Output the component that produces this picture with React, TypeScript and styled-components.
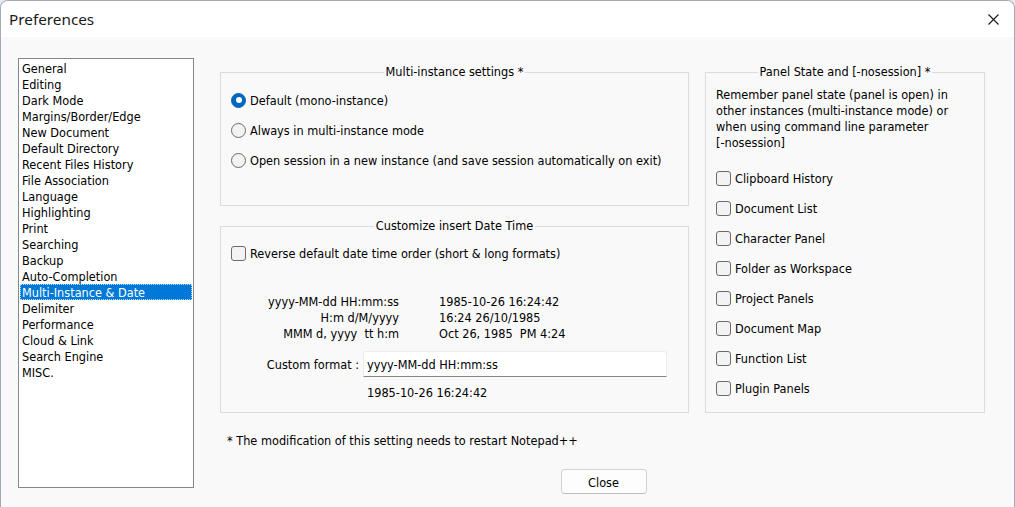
import React from 'react'
import styled, { createGlobalStyle } from 'styled-components'

const Global = createGlobalStyle`
  html, body {
    margin: 0;
    padding: 0;
    background: #e6e9ee;
  }
  body {
    font-family: "DejaVu Sans Condensed", "DejaVu Sans", sans-serif;
    font-size: 12.6px;
    color: #000;
  }
`

const Window = styled.div`
  width: 1015px;
  height: 507px;
  box-sizing: border-box;
  border: 1px solid #a3aab5;
  border-bottom: none;
  border-radius: 8px 8px 0 0;
  overflow: hidden;
  background: #f9f9f9;
  display: flex;
  flex-direction: column;
`
const TitleBar = styled.div`
  height: 36px;
  flex-shrink: 0;
  background: #fff;
  display: flex;
  align-items: center;
  justify-content: space-between;
  padding: 0 15px 0 8px;
`
const Title = styled.div`
  font-family: "Noto Sans", sans-serif;
  font-size: 15.3px;
  color: #1a1a1a;
`
const Body = styled.div`
  flex: 1;
  display: flex;
  align-items: flex-start;
  padding: 21px 0 0 17px;
`
const NavList = styled.ul`
  list-style: none;
  margin: 0;
  width: 176px;
  height: 430px;
  box-sizing: border-box;
  border: 1px solid #828790;
  background: #fff;
  padding: 1px;
`
const NavItem = styled.li<{ $active?: boolean }>`
  height: 16px;
  line-height: 17px;
  padding-left: 2px;
  white-space: nowrap;
  background: ${p => (p.$active ? '#0078d7' : 'transparent')};
  color: ${p => (p.$active ? '#fff' : '#000')};
  outline: ${p => (p.$active ? '1px dotted #b9dcf7' : 'none')};
  outline-offset: -1px;
`
const Main = styled.div`
  margin-left: 26px;
  padding-top: 6px;
  width: 765px;
  display: flex;
  flex-direction: column;
`
const TopGrid = styled.div`
  display: grid;
  grid-template-columns: 469px 280px;
  column-gap: 16px;
`
const Column = styled.div`
  display: flex;
  flex-direction: column;
  gap: 12px;
`
const Group = styled.fieldset<{ $h: number }>`
  margin: 0;
  min-width: 0;
  height: ${p => p.$h}px;
  box-sizing: border-box;
  border: 1px solid #dcdcdc;
  padding: 0 10px;
`
const Legend = styled.legend`
  margin: 0 auto;
  padding: 0 2px;
  line-height: 16px;
`
const Options = styled.div<{ $top: number }>`
  padding-top: ${p => p.$top}px;
  display: flex;
  flex-direction: column;
`
const OptionRow = styled.label`
  height: 30px;
  display: flex;
  align-items: center;
  gap: 4px;
  white-space: nowrap;
`
const OptionText = styled.span`
  padding-top: 1px;
`
const RadioMark = styled.span<{ $on?: boolean }>`
  width: 15px;
  height: 15px;
  box-sizing: border-box;
  border-radius: 50%;
  flex-shrink: 0;
  display: flex;
  align-items: center;
  justify-content: center;
  border: 1px solid ${p => (p.$on ? '#0067c0' : '#6b6b6b')};
  background: ${p => (p.$on ? '#0067c0' : '#f3f3f3')};
  &::after {
    content: '';
    display: ${p => (p.$on ? 'block' : 'none')};
    width: 6px;
    height: 6px;
    border-radius: 50%;
    background: #fff;
  }
`
const CheckMark = styled.span`
  width: 15px;
  height: 15px;
  box-sizing: border-box;
  border-radius: 3px;
  flex-shrink: 0;
  border: 1px solid #6b6b6b;
  background: #f3f3f3;
`
const DateTable = styled.div`
  margin-top: 26px;
  display: grid;
  grid-template-columns: 168px auto;
  column-gap: 40px;
  line-height: 16px;
  white-space: pre;
`
const FormatCell = styled.span`
  justify-self: end;
`
const CustomRow = styled.div`
  margin-top: 9px;
  display: flex;
  align-items: center;
  gap: 4px;
`
const CustomLabel = styled.span`
  width: 128px;
  text-align: right;
  white-space: nowrap;
`
const FormatInput = styled.div`
  width: 304px;
  height: 26px;
  box-sizing: border-box;
  background: #fff;
  border: 1px solid #ececec;
  border-bottom: 1px solid #868686;
  border-radius: 3px 3px 0 0;
  padding-left: 3px;
  display: flex;
  align-items: center;
`
const Preview = styled.div`
  margin-top: 8px;
  padding-left: 136px;
  line-height: 16px;
`
const Description = styled.div`
  padding-top: 7px;
  line-height: 16px;
`
const Note = styled.div`
  margin-top: 19px;
  padding-left: 7px;
  line-height: 17px;
`
const Footer = styled.div`
  margin-top: 20px;
  display: flex;
  justify-content: center;
  padding-left: 2px;
`
const Button = styled.button`
  width: 86px;
  height: 25px;
  font: inherit;
  color: #000;
  background: #fdfdfd;
  border: 1px solid #d3d3d3;
  border-bottom-color: #bcbcbc;
  border-radius: 4px;
  padding: 1px 0 0;
`

const pages = [
  'General', 'Editing', 'Dark Mode', 'Margins/Border/Edge', 'New Document',
  'Default Directory', 'Recent Files History', 'File Association', 'Language',
  'Highlighting', 'Print', 'Searching', 'Backup', 'Auto-Completion',
  'Multi-Instance & Date', 'Delimiter', 'Performance', 'Cloud & Link',
  'Search Engine', 'MISC.',
]

const modes = [
  'Default (mono-instance)',
  'Always in multi-instance mode',
  'Open session in a new instance (and save session automatically on exit)',
]

const samples = [
  ['yyyy-MM-dd HH:mm:ss', '1985-10-26 16:24:42'],
  ['H:m d/M/yyyy', '16:24 26/10/1985'],
  ['MMM d, yyyy  tt h:m', 'Oct 26, 1985  PM 4:24'],
]

const panels = [
  'Clipboard History', 'Document List', 'Character Panel', 'Folder as Workspace',
  'Project Panels', 'Document Map', 'Function List', 'Plugin Panels',
]

export default function App() {
  return (
    <>
      <Global />
      <Window>
        <TitleBar>
          <Title>Preferences</Title>
          <svg width="11" height="11" viewBox="0 0 11 11">
            <path d="M0.5 0.5 L10.5 10.5 M10.5 0.5 L0.5 10.5" stroke="#1a1a1a" strokeWidth="1.1" />
          </svg>
        </TitleBar>
        <Body>
          <NavList>
            {pages.map(p => (
              <NavItem key={p} $active={p === 'Multi-Instance & Date'}>{p}</NavItem>
            ))}
          </NavList>
          <Main>
            <TopGrid>
              <Column>
                <Group $h={142}>
                  <Legend>Multi-instance settings *</Legend>
                  <Options $top={5}>
                    {modes.map((m, i) => (
                      <OptionRow key={m}>
                        <RadioMark $on={i === 0} />
                        <OptionText>{m}</OptionText>
                      </OptionRow>
                    ))}
                  </Options>
                </Group>
                <Group $h={195}>
                  <Legend>Customize insert Date Time</Legend>
                  <Options $top={4}>
                    <OptionRow>
                      <CheckMark />
                      <OptionText>Reverse default date time order (short &amp; long formats)</OptionText>
                    </OptionRow>
                  </Options>
                  <DateTable>
                    {samples.map(([f, v]) => (
                      <React.Fragment key={f}>
                        <FormatCell>{f}</FormatCell>
                        <span>{v}</span>
                      </React.Fragment>
                    ))}
                  </DateTable>
                  <CustomRow>
                    <CustomLabel>Custom format :</CustomLabel>
                    <FormatInput>yyyy-MM-dd HH:mm:ss</FormatInput>
                  </CustomRow>
                  <Preview>1985-10-26 16:24:42</Preview>
                </Group>
              </Column>
              <Group $h={349}>
                <Legend>Panel State and [-nosession] *</Legend>
                <Description>
                  Remember panel state (panel is open) in<br />
                  other instances (multi-instance mode) or<br />
                  when using command line parameter<br />
                  [-nosession]
                </Description>
                <Options $top={12}>
                  {panels.map(p => (
                    <OptionRow key={p}>
                      <CheckMark />
                      <OptionText>{p}</OptionText>
                    </OptionRow>
                  ))}
                </Options>
              </Group>
            </TopGrid>
            <Note>* The modification of this setting needs to restart Notepad++</Note>
            <Footer>
              <Button>Close</Button>
            </Footer>
          </Main>
        </Body>
      </Window>
    </>
  )
}
